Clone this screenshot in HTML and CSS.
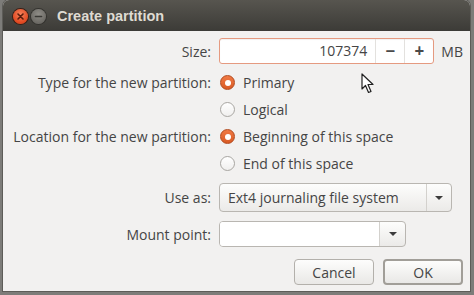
FILE: index.html
```html
<!DOCTYPE html>
<html lang="en">
<head>
  <meta charset="UTF-8">
  <title>Create partition</title>
  <link rel="stylesheet" href="styles.css">
</head>
<body>

<div class="window">
  <!-- title bar -->
  <div class="titlebar">
    <span class="wbtn close-btn">
      <svg width="15" height="15" viewBox="0 0 15 15"><path d="M5 5 L10 10 M10 5 L5 10" stroke="#5a1c0c" stroke-width="1.6" stroke-linecap="round"/></svg>
    </span>
    <span class="wbtn min-btn">
      <svg width="15" height="15" viewBox="0 0 15 15"><path d="M4.5 7.5 H10.5" stroke="#3a3935" stroke-width="1.6" stroke-linecap="round"/></svg>
    </span>
    <span class="title">Create partition</span>
  </div>

  <div class="content">
    <div class="row size-row">
      <label class="lbl">Size:</label>
      <div class="spin">
        <span class="spin-val">107374</span>
        <span class="spin-btn">&minus;</span>
        <span class="spin-btn">+</span>
      </div>
      <span class="unit">MB</span>
    </div>

    <div class="row radio-row">
      <label class="lbl">Type for the new partition:</label>
      <span class="radio on"></span><span class="opt">Primary</span>
    </div>
    <div class="row radio-row">
      <label class="lbl"></label>
      <span class="radio"></span><span class="opt">Logical</span>
    </div>
    <div class="row radio-row">
      <label class="lbl">Location for the new partition:</label>
      <span class="radio on"></span><span class="opt">Beginning of this space</span>
    </div>
    <div class="row radio-row">
      <label class="lbl"></label>
      <span class="radio"></span><span class="opt">End of this space</span>
    </div>

    <div class="row use-row">
      <label class="lbl">Use as:</label>
      <div class="combo use-combo">
        <span class="combo-text">Ext4 journaling file system</span>
        <span class="combo-arrow"><span class="tri"></span></span>
      </div>
    </div>

    <div class="row mount-row">
      <label class="lbl">Mount point:</label>
      <div class="combo mount-combo">
        <span class="combo-entry"></span>
        <span class="combo-arrow"><span class="tri"></span></span>
      </div>
    </div>

    <div class="buttons">
      <button class="btn">Cancel</button>
      <button class="btn default">OK</button>
    </div>
  </div>

  <!-- mouse pointer over the dialog -->
  <svg class="pointer" width="14" height="21" viewBox="0 0 14 21">
    <path d="M1 1 L1 16 L4.5 12.5 L7.5 19.5 L10 18.5 L7 11.5 L12 11.5 Z" fill="#fff" stroke="#222" stroke-width="1.2" stroke-linejoin="round"/>
  </svg>
</div>

</body>
</html>
```

FILE: styles.css
```css
body {
  margin: 0;
  background: #7d7c79;
  font-family: "Open Sans", "DejaVu Sans", sans-serif;
  width: 474px;
  height: 295px;
  overflow: hidden;
}
.window {
  position: relative;
  margin-left: 3px;
  width: 467px;
  height: 291px;
  background: #f2f1f0;
  border-radius: 6px 6px 0 0;
  box-shadow: 0 0 0 1px #5d5c58;
}
.titlebar {
  height: 31px;
  display: flex;
  align-items: center;
  background: linear-gradient(#57554f, #3c3b37);
  border-radius: 6px 6px 0 0;
  padding-left: 10px;
}
.wbtn {
  width: 15px; height: 15px;
  border-radius: 50%;
  display: inline-flex;
  margin-right: 3px;
  margin-top: 1px;
}
.close-btn {
  background: radial-gradient(circle at 50% 35%, #f7825c, #e0471f 70%);
  box-shadow: 0 0 0 1px #3b1e14;
}
.min-btn {
  background: radial-gradient(circle at 50% 35%, #8f8d87, #6c6a65 70%);
  box-shadow: 0 0 0 1px #34332f;
}
.title {
  margin-left: 8px;
  color: #dfdbd2;
  font-family: "Liberation Sans", Arial, sans-serif;
  font-weight: bold;
  font-size: 14.5px;
  margin-top: 1px;
}
.content { padding: 7px 7px 0 8px; color: #454545; font-size: 14px; }
.row { display: flex; align-items: center; }
.lbl { width: 200px; text-align: right; margin-right: 8px; flex-shrink: 0; }
.size-row { height: 26px; margin-bottom: 5px; }
.radio-row { height: 27px; }
.use-row { height: 29px; margin-top: 6px; }
.mount-row { height: 26px; margin-top: 9px; }

.spin {
  width: 216px; height: 26px;
  box-sizing: border-box;
  display: flex;
  border: 1px solid #e59a80;
  border-radius: 3px;
  background: #fff;
  box-shadow: inset 0 1px 1px rgba(0,0,0,0.06);
}
.spin-val { flex: 1; text-align: right; padding-right: 8px; line-height: 24px; }
.spin-btn {
  width: 28px; text-align: center; line-height: 23px;
  border-left: 1px solid #e3e1de;
  font-size: 17px; font-weight: bold; color: #4a4a4a;
}
.unit { margin-left: 7px; }

.radio {
  width: 15px; height: 15px;
  box-sizing: border-box;
  border-radius: 50%;
  border: 1px solid #a8a6a2;
  background: linear-gradient(#fff, #f0efee);
  margin-left: 1px;
  margin-right: 8px;
  position: relative;
}
.radio.on {
  border-color: #b24a1e;
  background: linear-gradient(#f07a45, #d95a24);
}
.radio.on::after {
  content: "";
  position: absolute;
  left: 3.5px; top: 3.5px;
  width: 6px; height: 6px;
  border-radius: 50%;
  background: #fff;
}

.combo {
  display: flex;
  box-sizing: border-box;
  border: 1px solid #b9b6b1;
  border-radius: 4px;
  background: linear-gradient(#fdfdfc, #ebeae8);
}
.use-combo { width: 233px; height: 29px; }
.mount-combo { width: 187px; height: 26px; }
.combo-text { flex: 1; padding-left: 8px; line-height: 27px; }
.combo-entry { flex: 1; background: #fff; border-radius: 3px 0 0 3px; }
.combo-arrow {
  width: 24px;
  border-left: 1px solid #d3d1cd;
  display: flex; align-items: center; justify-content: center;
}
.mount-combo .combo-arrow { width: 25px; }
.tri {
  width: 0; height: 0;
  border-left: 4px solid transparent;
  border-right: 4px solid transparent;
  border-top: 4px solid #3c3c3c;
}

.buttons {
  display: flex;
  justify-content: flex-end;
  gap: 9px;
  margin-top: 12px;
}
.btn {
  width: 80px; height: 26px;
  font-family: inherit; font-size: 14px; color: #454545;
  border: 1px solid #b3b0ab;
  border-radius: 4px;
  background: linear-gradient(#fdfdfc, #e9e8e6);
  padding: 0;
}
.btn.default { border: 2px solid #a19e98; }

.pointer { position: absolute; left: 358px; top: 73px; }
```
